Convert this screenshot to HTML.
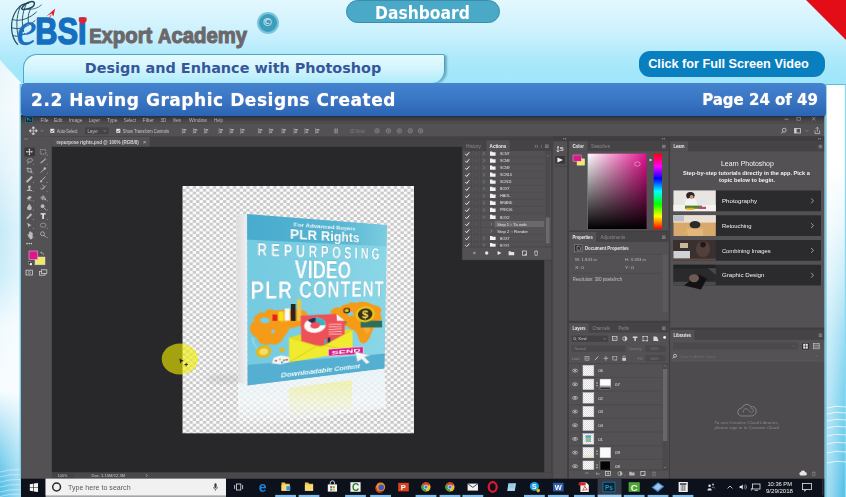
<!DOCTYPE html>
<html lang="en">
<head>
<meta charset="utf-8">
<title>2.2 Having Graphic Designs Created</title>
<style>
html,body{margin:0;padding:0;}
body{width:846px;height:497px;overflow:hidden;position:relative;background:#fff;font-family:"DejaVu Sans","Liberation Sans",sans-serif;}
.abs{position:absolute;}
#stage{position:absolute;left:0;top:0;width:846px;height:497px;overflow:hidden;background:#fff;}
#hdr{left:0;top:0;width:846px;height:84px;border-bottom:1px solid #63bcd3;background:linear-gradient(#e3f8fe 0,#d5f4fe 20px,#c4effd 40px,#b0eafb 55px,#a4e7fa 70px,#9fe6fa 84px);}
#lstrip{left:0;top:60px;width:21px;height:437px;clip-path:polygon(0 0,21px 23px,21px 100%,0 100%);background:linear-gradient(to right,rgba(255,255,255,0) 0,rgba(255,255,255,.4) 85%,rgba(255,255,255,.4) 100%),linear-gradient(#eaf6fb 0,#eff9fd 50px,#e0f3fb 110px,#c6eaf8 170px,#cbedf9 215px,#f0fafe 265px,#f7fcff 330px,#93d8f1 385px,#55bfe7 425px,#55bfe7 437px);}
#rstrip{left:825px;top:85px;width:21px;height:412px;background:linear-gradient(to right,rgba(255,255,255,.5) 0,rgba(255,255,255,.42) 30%,rgba(255,255,255,0) 100%),linear-gradient(#ffffff 0,#ffffff 80px,#e8f7fc 140px,#c6ebf8 195px,#9cdcf3 250px,#78d0ee 310px,#5fc6ea 375px,#4cbbe5 412px);}
#tab{left:23px;top:53.6px;width:420px;height:28.6px;border:1px solid #4fa9c4;border-right:1.6px solid #4a9db8;border-bottom:none;border-radius:14px 2px 13px 0;background:linear-gradient(#e6faff 0,#d2f4fd 50%,#aeecfb 100%);box-shadow:2px 1px 2px rgba(60,120,150,.5);}
#tabtxt{left:23px;top:54px;width:420px;height:28px;line-height:29px;text-align:center;font-weight:bold;font-size:14.4px;color:#35579a;letter-spacing:0px;}
#bar{left:21px;top:83px;width:805px;height:32.8px;border-radius:5px 5px 4px 4px;background:linear-gradient(#4583cf 0,#3a78c6 45%,#2b64b3 100%);box-shadow:0 1px 1px rgba(20,50,100,.6);}
#title{left:31px;top:84px;height:32px;line-height:33px;color:#fff;font-weight:bold;font-size:17px;letter-spacing:.55px;text-shadow:0 0 1px rgba(255,220,220,.8);white-space:nowrap;}
#pageno{right:28px;top:84px;height:32px;line-height:33px;color:#fff;font-weight:bold;font-size:15px;white-space:nowrap;text-shadow:0 0 1px rgba(255,220,220,.8);}
#dash{left:346px;top:0px;width:152px;height:20.8px;border:1px solid #3b8caa;border-radius:12px;background:#4aa9c6;color:#fff;font-weight:bold;font-size:17.2px;line-height:25.5px;text-align:center;}
#dash span{display:inline-block;transform:scaleX(.905);transform-origin:50% 50%;margin-left:-2px;}
#copy{left:256.5px;top:12px;width:18px;height:18px;border:2px solid #7cc4da;border-radius:50%;background:#3d9dbd;color:#e8f8ff;font-size:11px;line-height:18px;text-align:center;}
#full{left:639px;top:51px;width:186px;height:26px;border-radius:11px;background:#0a7fc0;color:#fff;font-family:"Liberation Sans",sans-serif;font-weight:bold;font-size:12.7px;line-height:26px;text-align:left;padding-left:9.2px;box-sizing:border-box;white-space:nowrap;}
#vid{left:0;top:0;width:846px;height:497px;clip-path:inset(115px 21.5px 0 21px);font-family:"Liberation Sans",sans-serif;}
#ps{filter:blur(.55px);}
#cover{filter:blur(.4px);}

#cover{position:absolute;left:0;top:0;width:140px;height:171px;transform-origin:0 0;transform:matrix3d(1.54772792,0.39701789,0.00000000,0.00141532,0.03985153,1.06044144,0.00000000,0.00014920,0.00000000,0.00000000,1.00000000,0.00000000,247.00000000,214.00000000,0.00000000,1.00000000);}
</style>
</head>
<body>
<div id="stage">
  <div id="hdr" class="abs"></div>
  <div id="lstrip" class="abs"></div>
  <div id="rstrip" class="abs"></div>
  <svg class="abs" style="left:0;top:0" width="846" height="497" viewBox="0 0 846 497">
    <polygon points="806,0 846,0 846,40" fill="#e30d18"/>
    <rect x="19.6" y="84" width="1.6" height="395" fill="#7ccdea"/>
    <rect x="824.6" y="85" width="2" height="412" fill="#6cc8e8"/>
    <rect x="844.8" y="85" width="1.2" height="412" fill="#86dbf2"/>
    <g fill="none" stroke="#ffffff" stroke-opacity=".8" stroke-width=".9">
      <path d="M827 408q9 -3 19 -1M827 414q9 -3 19 -1M827 421q9 -3 19 -1M827 428q9 -3 19 -1M827 436q9 -3 19 -1M827 444q9 -3 19 -1M827 453q9 -3 19 -1M827 463q9 -3 19 -1"/>
      <path d="M0 472q10 -3 20 -2.4M0 477q10 -3 20 -2.4M0 482q10 -3 20 -2.4M0 487q10 -3 20 -2.4M0 492q10 -3 20 -2.4M0 496.5q10 -3 20 -2.4" stroke-opacity=".6" stroke-width=".7"/>
    </g>
  </svg>
  <svg class="abs" style="left:0;top:0" width="300" height="52" viewBox="0 0 300 52">
    <g fill="none" stroke="#1f4a5c" stroke-width="1.15" stroke-linecap="round">
      <path d="M17.6 44.4C10.4 36.5 9 21 16.6 10C19.8 5.6 24 3.2 28.6 3.2"/>
      <path d="M21.6 8.6C25.6 1.4 35 -.4 34.4 3.8C33.8 7.8 26.6 10 22 9.2" stroke-width="1.5"/>
      <path d="M28 9.4C33 9.6 38 8.2 41.4 5" stroke-width=".7"/>
      <path d="M12.6 19.6C20 22 30 18.4 36.4 12" stroke-width=".9"/>
      <path d="M11.4 27.6C19 30.6 28 26.8 35 20.6" stroke-width=".9"/>
      <path d="M13.2 35.6C17.4 37 21.4 36 24.6 33.6" stroke-width=".9"/>
      <path d="M20.4 6.6C15.8 16 15.8 30 19.4 40" stroke-width=".9"/>
      <path d="M26 5C21.8 13 21.6 23 23.6 31.6" stroke-width=".9"/>
      <path d="M31.4 7.4C28.2 12.4 27.6 18 28.6 23.6" stroke-width=".9"/>
    </g>
    <text x="16.6" y="44.8" font-family="Liberation Serif, serif" font-style="italic" font-size="49" fill="#1a6fbf" stroke="#1a6fbf" stroke-width=".35" textLength="20" lengthAdjust="spacingAndGlyphs">e</text>
    <text x="35.2" y="44.4" font-family="Liberation Sans, sans-serif" font-weight="bold" font-size="37.4" fill="#166fbe" stroke="#166fbe" stroke-width="1.5" stroke-linejoin="round" textLength="51.4" lengthAdjust="spacingAndGlyphs">BSI</text>
    <path d="M78.8 17.4h7.8v3.6l-3.9 3.8l-3.9 -3.8z" fill="#e3202e"/>
    <path d="M46.4 16.2L55.2 8.6L53.4 16.6L51.6 13.4z" fill="#e3202e"/>
    <path d="M48.6 19.4l2.6 -4.6" stroke="#e3202e" stroke-width=".8" fill="none"/>
    <text x="89.2" y="42.6" font-family="Liberation Sans, sans-serif" font-weight="bold" font-size="22.6" fill="#6b686b" stroke="#6b686b" stroke-width="1.15" stroke-linejoin="round" textLength="158" lengthAdjust="spacingAndGlyphs"><tspan font-size="20.5">E</tspan>xport <tspan font-size="20.5">A</tspan>cademy</text>
  </svg>

  <div id="tab" class="abs"></div>
  <div id="tabtxt" class="abs">Design and Enhance with Photoshop</div>
  <div id="dash" class="abs"><span>Dashboard</span></div>
  <div id="copy" class="abs">©</div>
  <div id="full" class="abs">Click for Full Screen Video</div>
  <div id="vid" class="abs">
<svg id="ps" class="abs" style="left:0;top:0" width="846" height="497" viewBox="0 0 846 497" font-family="Liberation Sans, sans-serif">
<defs>
<pattern id="chk" x="182.75" y="186" width="6.7" height="5.66" patternUnits="userSpaceOnUse"><rect width="6.7" height="5.66" fill="#fcfcfc"/><rect x="3.35" width="3.35" height="2.83" fill="#c9c9c9"/><rect y="2.83" width="3.35" height="2.83" fill="#c9c9c9"/></pattern>
<pattern id="chk2" width="2" height="2" patternUnits="userSpaceOnUse"><rect width="2" height="2" fill="#fbfbfb"/><rect width="1" height="1" fill="#dcdcdc"/><rect x="1" y="1" width="1" height="1" fill="#dcdcdc"/></pattern>
<linearGradient id="gW" x1="0" y1="0" x2="1" y2="0"><stop offset="0" stop-color="#fff"/><stop offset="1" stop-color="#fff" stop-opacity="0"/></linearGradient>
<linearGradient id="gK" x1="0" y1="0" x2="0" y2="1"><stop offset="0" stop-color="#000" stop-opacity="0"/><stop offset="1" stop-color="#000"/></linearGradient>
<linearGradient id="gH" x1="0" y1="0" x2="0" y2="1"><stop offset="0" stop-color="#ff0000"/><stop offset=".17" stop-color="#ff00ff"/><stop offset=".33" stop-color="#0000ff"/><stop offset=".5" stop-color="#00ffff"/><stop offset=".67" stop-color="#00ff00"/><stop offset=".83" stop-color="#ffff00"/><stop offset="1" stop-color="#ff0000"/></linearGradient>
<linearGradient id="gSh" gradientUnits="userSpaceOnUse" x1="0" y1="115" x2="0" y2="122"><stop offset="0" stop-color="#2a292d"/><stop offset=".3" stop-color="#38363a"/><stop offset="1" stop-color="#4d4b4e"/></linearGradient>
<linearGradient id="gMask" x1="0" y1="0" x2="0" y2="1"><stop offset="0" stop-color="#fff"/><stop offset=".55" stop-color="#fff"/><stop offset=".95" stop-color="#111"/></linearGradient>
</defs>
<rect x="12.0" y="108.0" width="824.0" height="398.0" fill="#535154"/>
<rect x="12.0" y="108.0" width="824.0" height="16.0" fill="#4d4b4e"/>
<rect x="12.0" y="108.0" width="824.0" height="14.0" fill="url(#gSh)"/>
<rect x="25.4" y="117.0" width="7.0" height="5.3" fill="#0b2a3c" stroke="#2a8db0" stroke-width="0.5"/>
<text x="26.8" y="121.0" font-size="3.6" fill="#2fa0cc" textLength="4.4" lengthAdjust="spacingAndGlyphs" font-weight="bold">Ps</text>
<text x="40.5" y="121.6" font-size="5.1" fill="#b9b9b9" textLength="8.0" lengthAdjust="spacingAndGlyphs">File</text>
<text x="54.0" y="121.6" font-size="5.1" fill="#b9b9b9" textLength="8.5" lengthAdjust="spacingAndGlyphs">Edit</text>
<text x="69.0" y="121.6" font-size="5.1" fill="#b9b9b9" textLength="13.5" lengthAdjust="spacingAndGlyphs">Image</text>
<text x="88.7" y="121.6" font-size="5.1" fill="#b9b9b9" textLength="11.3" lengthAdjust="spacingAndGlyphs">Layer</text>
<text x="107.0" y="121.6" font-size="5.1" fill="#b9b9b9" textLength="10.5" lengthAdjust="spacingAndGlyphs">Type</text>
<text x="123.7" y="121.6" font-size="5.1" fill="#b9b9b9" textLength="12.3" lengthAdjust="spacingAndGlyphs">Select</text>
<text x="142.6" y="121.6" font-size="5.1" fill="#b9b9b9" textLength="11.4" lengthAdjust="spacingAndGlyphs">Filter</text>
<text x="160.5" y="121.6" font-size="5.1" fill="#b9b9b9" textLength="5.5" lengthAdjust="spacingAndGlyphs">3D</text>
<text x="172.8" y="121.6" font-size="5.1" fill="#b9b9b9" textLength="8.2" lengthAdjust="spacingAndGlyphs">View</text>
<text x="189.0" y="121.6" font-size="5.1" fill="#b9b9b9" textLength="18.0" lengthAdjust="spacingAndGlyphs">Window</text>
<text x="214.0" y="121.6" font-size="5.1" fill="#b9b9b9" textLength="9.0" lengthAdjust="spacingAndGlyphs">Help</text>
<path d="M784.5 119.2H788.5" fill="none" stroke="#9c9c9c" stroke-width="0.70"/>
<rect x="797.0" y="117.2" width="3.6" height="3.0" fill="none" stroke="#9c9c9c" stroke-width="0.6"/>
<path d="M812 117l3.6 3.4M815.6 117l-3.6 3.4" fill="none" stroke="#9c9c9c" stroke-width="0.70"/>
<rect x="12.0" y="124.0" width="824.0" height="12.4" fill="#535154"/>
<path d="M33.3 127.2v7.2M29.7 130.8h7.2M33.3 126.6l-1.4 1.6h2.8zM33.3 135l-1.4-1.6h2.8zM29.1 130.8l1.6-1.4v2.8zM37.5 130.8l-1.6-1.4v2.8z" fill="#d0d0d0" stroke="#d0d0d0" stroke-width="0.70"/>
<path d="M40.8 130.2l1.2 1.3 1.2-1.3" fill="none" stroke="#a8a8a8" stroke-width="0.60"/>
<rect x="50.3" y="128.8" width="4.0" height="4.0" fill="#e8e8e8"/>
<path d="M51 130.8l1 1.1 1.7-2" fill="none" stroke="#333" stroke-width="0.60"/>
<text x="57.0" y="132.5" font-size="4.8" fill="#c6c6c6" textLength="21.3" lengthAdjust="spacingAndGlyphs">Auto-Select:</text>
<rect x="85.0" y="127.3" width="23.6" height="7.0" fill="#454346"/>
<text x="87.5" y="132.5" font-size="4.6" fill="#bdbdbd" textLength="10.5" lengthAdjust="spacingAndGlyphs">Layer</text>
<path d="M103.6 130.2l1.2 1.3 1.2-1.3" fill="none" stroke="#a8a8a8" stroke-width="0.60"/>
<rect x="116.3" y="128.8" width="4.0" height="4.0" fill="#e8e8e8"/>
<path d="M117 130.8l1 1.1 1.7-2" fill="none" stroke="#333" stroke-width="0.60"/>
<text x="122.8" y="132.5" font-size="4.8" fill="#c6c6c6" textLength="46.2" lengthAdjust="spacingAndGlyphs">Show Transform Controls</text>
<path d="M182.4 128.2v5.4" fill="none" stroke="#a6a6a6" stroke-width="0.70"/>
<rect x="183.2" y="129.0" width="3.0" height="1.6" fill="#a6a6a6"/>
<rect x="183.2" y="131.4" width="2.0" height="1.6" fill="#a6a6a6"/>
<path d="M193.4 128.2v5.4" fill="none" stroke="#a6a6a6" stroke-width="0.70"/>
<rect x="194.2" y="129.0" width="3.0" height="1.6" fill="#a6a6a6"/>
<rect x="194.2" y="131.4" width="2.0" height="1.6" fill="#a6a6a6"/>
<path d="M204.4 128.2v5.4" fill="none" stroke="#a6a6a6" stroke-width="0.70"/>
<rect x="205.2" y="129.0" width="3.0" height="1.6" fill="#a6a6a6"/>
<rect x="205.2" y="131.4" width="2.0" height="1.6" fill="#a6a6a6"/>
<path d="M219.1 128.2v5.4" fill="none" stroke="#a6a6a6" stroke-width="0.70"/>
<rect x="219.9" y="129.0" width="3.0" height="1.6" fill="#a6a6a6"/>
<rect x="219.9" y="131.4" width="2.0" height="1.6" fill="#a6a6a6"/>
<path d="M230.1 128.2v5.4" fill="none" stroke="#a6a6a6" stroke-width="0.70"/>
<rect x="230.9" y="129.0" width="3.0" height="1.6" fill="#a6a6a6"/>
<rect x="230.9" y="131.4" width="2.0" height="1.6" fill="#a6a6a6"/>
<path d="M240.7 128.2v5.4" fill="none" stroke="#a6a6a6" stroke-width="0.70"/>
<rect x="241.5" y="129.0" width="3.0" height="1.6" fill="#a6a6a6"/>
<rect x="241.5" y="131.4" width="2.0" height="1.6" fill="#a6a6a6"/>
<path d="M258.4 128.2v5.4" fill="none" stroke="#a6a6a6" stroke-width="0.70"/>
<rect x="259.2" y="129.0" width="3.0" height="1.6" fill="#a6a6a6"/>
<rect x="259.2" y="131.4" width="2.0" height="1.6" fill="#a6a6a6"/>
<path d="M269.4 128.2v5.4" fill="none" stroke="#a6a6a6" stroke-width="0.70"/>
<rect x="270.2" y="129.0" width="3.0" height="1.6" fill="#a6a6a6"/>
<rect x="270.2" y="131.4" width="2.0" height="1.6" fill="#a6a6a6"/>
<path d="M282.1 128.2v5.4" fill="none" stroke="#a6a6a6" stroke-width="0.70"/>
<rect x="282.9" y="129.0" width="3.0" height="1.6" fill="#a6a6a6"/>
<rect x="282.9" y="131.4" width="2.0" height="1.6" fill="#a6a6a6"/>
<path d="M294.1 128.2v5.4" fill="none" stroke="#a6a6a6" stroke-width="0.70"/>
<rect x="294.9" y="129.0" width="3.0" height="1.6" fill="#a6a6a6"/>
<rect x="294.9" y="131.4" width="2.0" height="1.6" fill="#a6a6a6"/>
<path d="M305.0 128.2v5.4" fill="none" stroke="#a6a6a6" stroke-width="0.70"/>
<rect x="305.8" y="129.0" width="3.0" height="1.6" fill="#a6a6a6"/>
<rect x="305.8" y="131.4" width="2.0" height="1.6" fill="#a6a6a6"/>
<path d="M315.6 128.2v5.4" fill="none" stroke="#a6a6a6" stroke-width="0.70"/>
<rect x="316.4" y="129.0" width="3.0" height="1.6" fill="#a6a6a6"/>
<rect x="316.4" y="131.4" width="2.0" height="1.6" fill="#a6a6a6"/>
<rect x="334.6" y="128.4" width="1.0" height="5.0" fill="#a6a6a6"/>
<rect x="336.6" y="128.4" width="1.0" height="5.0" fill="#a6a6a6"/>
<text x="349.8" y="132.5" font-size="4.6" fill="#807e81" textLength="16.0" lengthAdjust="spacingAndGlyphs">3D Mode:</text>
<circle cx="377.0" cy="130.8" r="2.2" fill="none" stroke="#8b898c" stroke-width="0.80"/>
<path d="M377.0 129.4v2.8M375.6 130.8h2.8" fill="none" stroke="#8b898c" stroke-width="0.60"/>
<circle cx="388.4" cy="130.8" r="2.2" fill="none" stroke="#8b898c" stroke-width="0.80"/>
<path d="M388.4 129.4v2.8M387.0 130.8h2.8" fill="none" stroke="#8b898c" stroke-width="0.60"/>
<circle cx="399.4" cy="130.8" r="2.2" fill="none" stroke="#8b898c" stroke-width="0.80"/>
<path d="M399.4 129.4v2.8M398.0 130.8h2.8" fill="none" stroke="#8b898c" stroke-width="0.60"/>
<circle cx="410.3" cy="130.8" r="2.2" fill="none" stroke="#8b898c" stroke-width="0.80"/>
<path d="M410.3 129.4v2.8M408.9 130.8h2.8" fill="none" stroke="#8b898c" stroke-width="0.60"/>
<circle cx="420.6" cy="130.8" r="2.2" fill="none" stroke="#8b898c" stroke-width="0.80"/>
<path d="M420.6 129.4v2.8M419.2 130.8h2.8" fill="none" stroke="#8b898c" stroke-width="0.60"/>
<circle cx="784.2" cy="130.2" r="1.9" fill="none" stroke="#d0d0d0" stroke-width="0.80"/>
<path d="M782.8 131.8l-1.5 1.7" fill="none" stroke="#d0d0d0" stroke-width="0.80"/>
<rect x="794.6" y="128.6" width="5.8" height="4.4" fill="none" stroke="#d0d0d0" stroke-width="0.8"/>
<rect x="794.6" y="128.6" width="2.0" height="4.4" fill="#d0d0d0"/>
<path d="M805.6 130.2l1.3 1.3 1.3-1.3" fill="none" stroke="#9a9a9a" stroke-width="0.60"/>
<path d="M815 130.4v3.2h4.6v-3.2M817.3 131.6v-4.2M815.9 128.6l1.4-1.4 1.4 1.4" fill="none" stroke="#d0d0d0" stroke-width="0.70"/>
<rect x="12.0" y="136.4" width="824.0" height="10.4" fill="#434144"/>
<rect x="12.0" y="136.4" width="39.8" height="341.8" fill="#535154"/>
<path d="M24.4 139h1.2M26.4 139h1.2" fill="none" stroke="#bdbdbd" stroke-width="0.70"/>
<rect x="52.0" y="137.0" width="97.8" height="9.8" fill="#535154"/>
<text x="56.6" y="144.1" font-size="5.0" fill="#d6d6d6" textLength="82.2" lengthAdjust="spacingAndGlyphs" font-weight="bold">repurpose rights.psd @ 100% (RGB/8)</text>
<text x="144.6" y="144.2" font-size="5.5" fill="#c8c8c8" text-anchor="middle">×</text>
<rect x="51.8" y="146.8" width="501.2" height="325.8" fill="#28282a"/>
<rect x="51.8" y="472.6" width="501.2" height="5.8" fill="#4a484b"/>
<rect x="51.8" y="472.6" width="22.2" height="5.8" fill="#454346"/>
<text x="57.8" y="477.0" font-size="4.2" fill="#c9c9c9" textLength="9.5" lengthAdjust="spacingAndGlyphs">100%</text>
<text x="91.4" y="477.0" font-size="4.2" fill="#c9c9c9" textLength="33.8" lengthAdjust="spacingAndGlyphs">Doc: 1.15M/12.3M</text>
<path d="M146 474.2l1.3 1.4-1.3 1.4" fill="none" stroke="#bdbdbd" stroke-width="0.60"/>
<rect x="544.2" y="146.8" width="7.4" height="325.8" fill="#4a484b"/>
<rect x="551.4" y="136.4" width="1.8" height="342.0" fill="#454346"/>
<rect x="24.4" y="147.6" width="10.6" height="8.8" fill="#3a383b"/>
<g transform="translate(29.40 151.80) scale(.86) translate(-29.40 -151.80)" opacity=".92">
<path d="M29.4 148.6v6.4M26.2 151.8h6.4" fill="none" stroke="#fff" stroke-width="0.90"/>
<path d="M29.4 147.9l-1.2 1.4h2.4zM29.4 155.7l-1.2 -1.4h2.4zM25.5 151.8l1.4 -1.2v2.4zM33.3 151.8l-1.4 -1.2v2.4z" fill="#fff"/>
</g>
<g transform="translate(43.10 151.80) scale(.86) translate(-43.10 -151.80)" opacity=".92">
<rect x="39.9" y="149.2" width="6.4" height="5.2" fill="none" stroke="#c4c4c4" stroke-width="0.8" stroke-dasharray="1.4 0.9"/>
</g>
<path d="M46.4 155.4h1.2v-1.2z" fill="#a8a8a8"/>
<g transform="translate(29.40 160.98) scale(.86) translate(-29.40 -160.98)" opacity=".92">
<path d="M29.4 158.6c-3 0 -3.6 3 -1 3.6c3 .6 5 -1 4.4 -2.8c-.5 -1.4 -2 -1.6 -3.4 -.8M28.4 162.2l-1.2 2.4" fill="none" stroke="#c4c4c4" stroke-width="0.80"/>
</g>
<g transform="translate(43.10 160.98) scale(.86) translate(-43.10 -160.98)" opacity=".92">
<path d="M40.3 163.6l5 -4.6" fill="none" stroke="#c4c4c4" stroke-width="1.20"/>
<path d="M44.7 157.8l1.6 .2M46.3 160.0l.2 -1.4" fill="none" stroke="#c4c4c4" stroke-width="0.60"/>
</g>
<path d="M32.6 164.6h1.2v-1.2z" fill="#a8a8a8"/>
<path d="M46.4 164.6h1.2v-1.2z" fill="#a8a8a8"/>
<g transform="translate(29.40 170.16) scale(.86) translate(-29.40 -170.16)" opacity=".92">
<path d="M27.6 166.8v5.4h5.4M26.0 168.4h5.4v5.4" fill="none" stroke="#c4c4c4" stroke-width="0.90"/>
</g>
<g transform="translate(43.10 170.16) scale(.86) translate(-43.10 -170.16)" opacity=".92">
<path d="M40.3 173.0l4.2 -4.2" fill="none" stroke="#c4c4c4" stroke-width="1.10"/>
<circle cx="45.1" cy="168.2" r="1.4" fill="#c4c4c4"/>
</g>
<path d="M32.6 173.8h1.2v-1.2z" fill="#a8a8a8"/>
<path d="M46.4 173.8h1.2v-1.2z" fill="#a8a8a8"/>
<g transform="translate(29.40 179.34) scale(.86) translate(-29.40 -179.34)" opacity=".92">
<path d="M26.9 181.8l5 -5" fill="none" stroke="#c4c4c4" stroke-width="2.40" stroke-linecap="round"/>
</g>
<g transform="translate(43.10 179.34) scale(.86) translate(-43.10 -179.34)" opacity=".92">
<path d="M41.5 180.7l4.4 -4.6" fill="none" stroke="#c4c4c4" stroke-width="1.10"/>
<circle cx="40.8" cy="181.6" r="1.3" fill="#c4c4c4"/>
</g>
<path d="M32.6 182.9h1.2v-1.2z" fill="#a8a8a8"/>
<path d="M46.4 182.9h1.2v-1.2z" fill="#a8a8a8"/>
<g transform="translate(29.40 188.52) scale(.86) translate(-29.40 -188.52)" opacity=".92">
<path d="M26.4 190.1h6v1.4h-6zM28.4 187.5h2v2.6h-2z" fill="#c4c4c4"/>
<circle cx="29.4" cy="186.5" r="1.6" fill="#c4c4c4"/>
</g>
<g transform="translate(43.10 188.52) scale(.86) translate(-43.10 -188.52)" opacity=".92">
<path d="M42.1 189.7l4 -4.4" fill="none" stroke="#c4c4c4" stroke-width="1.10"/>
<path d="M39.7 187.9a2.4 2.4 0 1 0 2 -3.6" fill="none" stroke="#c4c4c4" stroke-width="0.70"/>
</g>
<path d="M32.6 192.1h1.2v-1.2z" fill="#a8a8a8"/>
<path d="M46.4 192.1h1.2v-1.2z" fill="#a8a8a8"/>
<g transform="translate(29.40 197.70) scale(.86) translate(-29.40 -197.70)" opacity=".92">
<path d="M26.2 198.7l3 -3.4l3 1.6l-3 3.4z" fill="#c4c4c4"/>
<path d="M27.4 200.7h5" fill="none" stroke="#999" stroke-width="0.60"/>
</g>
<g transform="translate(43.10 197.70) scale(.86) translate(-43.10 -197.70)" opacity=".92">
<path d="M39.7 197.7l3.4 -3l3 3.2l-3.4 3z" fill="#9d9d9d"/>
<circle cx="45.7" cy="199.7" r="1.0" fill="#c8c8c8"/>
</g>
<path d="M32.6 201.3h1.2v-1.2z" fill="#a8a8a8"/>
<path d="M46.4 201.3h1.2v-1.2z" fill="#a8a8a8"/>
<g transform="translate(29.40 206.88) scale(.86) translate(-29.40 -206.88)" opacity=".92">
<path d="M29.4 203.1c-2 2.8 -2.8 3.8 -2.8 5a2.8 2.8 0 0 0 5.6 0c0 -1.2 -.8 -2.2 -2.8 -5z" fill="#c4c4c4"/>
</g>
<g transform="translate(43.10 206.88) scale(.86) translate(-43.10 -206.88)" opacity=".92">
<circle cx="42.5" cy="206.1" r="2.2" fill="#c4c4c4"/>
<path d="M43.9 207.7l2.6 2.8" fill="none" stroke="#c4c4c4" stroke-width="1.10"/>
</g>
<path d="M32.6 210.5h1.2v-1.2z" fill="#a8a8a8"/>
<path d="M46.4 210.5h1.2v-1.2z" fill="#a8a8a8"/>
<g transform="translate(29.40 216.06) scale(.86) translate(-29.40 -216.06)" opacity=".92">
<path d="M26.4 217.7l4.6 -4.8l1.6 1.6l-4.8 4.6l-2 .6z" fill="#c4c4c4"/>
</g>
<g transform="translate(43.10 216.06) scale(.86) translate(-43.10 -216.06)" opacity=".92">
<path d="M40.1 212.7h6v1.6h-2.1v5.2h-1.8v-5.2h-2.1z" fill="#fff"/>
</g>
<path d="M32.6 219.7h1.2v-1.2z" fill="#a8a8a8"/>
<path d="M46.4 219.7h1.2v-1.2z" fill="#a8a8a8"/>
<g transform="translate(29.40 225.24) scale(.86) translate(-29.40 -225.24)" opacity=".92">
<path d="M26.6 222.2l5.4 3l-2.4 .5l-1 2.4z" fill="#c4c4c4"/>
</g>
<g transform="translate(43.10 225.24) scale(.86) translate(-43.10 -225.24)" opacity=".92">
<ellipse cx="43.1" cy="225.2" rx="3.4" ry="2.4" fill="none" stroke="#aaa" stroke-width="0.8"/>
</g>
<path d="M32.6 228.8h1.2v-1.2z" fill="#a8a8a8"/>
<path d="M46.4 228.8h1.2v-1.2z" fill="#a8a8a8"/>
<g transform="translate(29.40 234.42) scale(.86) translate(-29.40 -234.42)" opacity=".92">
<path d="M28.6 237.8c-1.2 -2 -2 -3.6 -.8 -3.8l1 1.2v-3.4h1v-1h1.2v1h1.2v.8h1v4.6c0 2 -1 3 -2.4 3z" fill="#c4c4c4"/>
</g>
<g transform="translate(43.10 234.42) scale(.86) translate(-43.10 -234.42)" opacity=".92">
<circle cx="42.4" cy="233.7" r="2.3" fill="none" stroke="#c4c4c4" stroke-width="0.90"/>
<path d="M44.1 235.4l2.4 2.4" fill="none" stroke="#c4c4c4" stroke-width="1.10"/>
</g>
<path d="M32.6 238.0h1.2v-1.2z" fill="#a8a8a8"/>
<path d="M46.4 238.0h1.2v-1.2z" fill="#a8a8a8"/>
<circle cx="27.0" cy="243.6" r="0.8" fill="#cfcfcf"/>
<circle cx="29.2" cy="243.6" r="0.8" fill="#cfcfcf"/>
<circle cx="31.4" cy="243.6" r="0.8" fill="#cfcfcf"/>
<rect x="35.0" y="257.0" width="10.0" height="7.8" fill="#f3e86a" stroke="#d8d8d8" stroke-width="0.5"/>
<rect x="29.0" y="251.0" width="8.8" height="8.6" fill="#e0148c" stroke="#d8d8d8" stroke-width="0.5"/>
<path d="M41 252.6a2.4 2.4 0 0 1 2.6 2.6" fill="none" stroke="#bdbdbd" stroke-width="0.60"/>
<path d="M40.2 252.6l1.4 -1v2z" fill="#bdbdbd"/>
<rect x="28.4" y="261.8" width="2.2" height="2.2" fill="#111" stroke="#bbb" stroke-width="0.4"/>
<rect x="29.8" y="263.0" width="2.2" height="2.2" fill="#fff" stroke="#555" stroke-width="0.3"/>
<rect x="26.0" y="270.2" width="6.6" height="4.8" fill="none" stroke="#cfcfcf" stroke-width="0.8"/>
<circle cx="29.3" cy="272.6" r="1.1" fill="none" stroke="#cfcfcf" stroke-width="0.60"/>
<rect x="39.6" y="271.4" width="5.4" height="3.8" fill="none" stroke="#cfcfcf" stroke-width="0.8"/>
<rect x="41.4" y="269.8" width="5.4" height="3.8" fill="#535154" stroke="#cfcfcf" stroke-width="0.8"/>
<rect x="553.4" y="136.4" width="282.6" height="4.8" fill="#3f3d40"/>
<path d="M563.2 138.8h1.2M565 138.8h1.2M662 138.8h1.2M663.8 138.8h1.2M818 138.8h1.2M819.8 138.8h1.2" fill="none" stroke="#c4c4c4" stroke-width="0.70"/>
<rect x="553.4" y="141.2" width="13.8" height="337.2" fill="#535154"/>
<rect x="567.2" y="141.2" width="1.8" height="337.2" fill="#403e41"/>
<path d="M558 146.6v5.2M556.6 150.4l1.4 1.6 1.4 -1.6" fill="none" stroke="#e4e4e4" stroke-width="0.80"/>
<rect x="557.2" y="146.4" width="1.6" height="1.2" fill="#e4e4e4"/>
<text x="560.0" y="151.4" font-size="5.4" fill="#e4e4e4" textLength="3.6" lengthAdjust="spacingAndGlyphs" font-weight="bold">5</text>
<rect x="555.2" y="156.0" width="9.8" height="7.8" fill="#39373a"/>
<path d="M557.4 157.6l5.6 2.4l-5.6 2.4z" fill="#f2f2f2"/>
<path d="M554 166.4h12.6" fill="none" stroke="#444245" stroke-width="0.60"/>
<rect x="569.0" y="141.2" width="99.6" height="90.4" fill="#535154"/>
<rect x="569.0" y="141.2" width="99.6" height="10.0" fill="#454346"/>
<rect x="569.0" y="141.2" width="18.4" height="10.2" fill="#535154"/>
<text x="572.4" y="148.1" font-size="5.0" fill="#f0f0f0" textLength="11.6" lengthAdjust="spacingAndGlyphs" font-weight="bold">Color</text>
<text x="591.0" y="148.0" font-size="4.8" fill="#8d8b8e" textLength="19.0" lengthAdjust="spacingAndGlyphs">Swatches</text>
<path d="M662 145.4h3.6M662 146.6h3.6M662 147.8h3.6" fill="none" stroke="#bdbdbd" stroke-width="0.50"/>
<rect x="577.0" y="158.8" width="7.8" height="6.4" fill="#f3e86a" stroke="#d6d6d6" stroke-width="0.4"/>
<rect x="573.0" y="155.0" width="8.2" height="6.2" fill="#e0148c" stroke="#d6d6d6" stroke-width="0.4"/>
<rect x="588.6" y="153.7" width="58" height="75.3" fill="#e6108e"/>
<rect x="587.7" y="153.7" width="58.9" height="75.3" fill="url(#gW)"/>
<rect x="587.7" y="153.7" width="58.9" height="75.3" fill="url(#gK)"/>
<ellipse cx="637.4" cy="164" rx="2.8" ry="2.2" fill="none" stroke="#f0d0e6" stroke-width="0.5"/>
<rect x="653.7" y="153.7" width="8.3" height="75.3" fill="url(#gH)"/>
<path d="M649.6 158.4l2.6 1.5l-2.6 1.5z" fill="#f4f4f4"/>
<rect x="668.6" y="141.2" width="1.8" height="337.2" fill="#403e41"/>
<rect x="569.0" y="231.6" width="99.6" height="91.0" fill="#535154"/>
<rect x="569.0" y="231.6" width="99.6" height="10.4" fill="#454346"/>
<rect x="569.0" y="231.6" width="27.2" height="10.6" fill="#535154"/>
<rect x="569.0" y="230.6" width="99.6" height="1.2" fill="#403e41"/>
<text x="572.4" y="238.6" font-size="4.8" fill="#f0f0f0" textLength="20.3" lengthAdjust="spacingAndGlyphs" font-weight="bold">Properties</text>
<text x="600.5" y="238.6" font-size="4.6" fill="#8d8b8e" textLength="24.8" lengthAdjust="spacingAndGlyphs">Adjustments</text>
<path d="M662 236h3.6M662 237.2h3.6M662 238.4h3.6" fill="none" stroke="#bdbdbd" stroke-width="0.50"/>
<rect x="574.6" y="244.8" width="7.4" height="7.0" fill="#2f2e30" stroke="#9a9a9a" stroke-width="0.5"/>
<path d="M577 246.2h2.4l1.2 1.2v2.8h-3.6z" fill="none" stroke="#cfcfcf" stroke-width="0.50"/>
<text x="585.0" y="249.9" font-size="4.8" fill="#e8e8e8" textLength="43.7" lengthAdjust="spacingAndGlyphs" font-weight="bold">Document Properties</text>
<path d="M572 254.4h90" fill="none" stroke="#48464a" stroke-width="0.60"/>
<text x="575.0" y="261.1" font-size="4.4" fill="#bcbcbc" textLength="22.0" lengthAdjust="spacingAndGlyphs">W:  1.833 in</text>
<text x="625.0" y="261.1" font-size="4.4" fill="#bcbcbc" textLength="21.0" lengthAdjust="spacingAndGlyphs">H:  3.333 in</text>
<text x="575.0" y="268.9" font-size="4.4" fill="#bcbcbc" textLength="9.0" lengthAdjust="spacingAndGlyphs">X:  0</text>
<text x="625.0" y="268.9" font-size="4.4" fill="#bcbcbc" textLength="9.0" lengthAdjust="spacingAndGlyphs">Y:  0</text>
<path d="M572 273.4h90" fill="none" stroke="#48464a" stroke-width="0.60"/>
<text x="572.8" y="281.3" font-size="4.5" fill="#c4c4c4" textLength="49.2" lengthAdjust="spacingAndGlyphs">Resolution: 300 pixels/inch</text>
<rect x="662.6" y="254.4" width="5.2" height="57.4" fill="#5b595c"/>
<rect x="569.0" y="320.8" width="99.6" height="2.4" fill="#403e41"/>
<rect x="569.0" y="323.2" width="99.6" height="155.2" fill="#535154"/>
<rect x="569.0" y="323.2" width="99.6" height="9.4" fill="#454346"/>
<rect x="569.0" y="323.2" width="19.6" height="9.6" fill="#535154"/>
<text x="572.6" y="329.8" font-size="4.8" fill="#f0f0f0" textLength="13.0" lengthAdjust="spacingAndGlyphs" font-weight="bold">Layers</text>
<text x="592.6" y="329.8" font-size="4.6" fill="#8d8b8e" textLength="17.4" lengthAdjust="spacingAndGlyphs">Channels</text>
<text x="618.6" y="329.8" font-size="4.6" fill="#8d8b8e" textLength="10.4" lengthAdjust="spacingAndGlyphs">Paths</text>
<path d="M662 327h3.6M662 328.2h3.6M662 329.4h3.6" fill="none" stroke="#bdbdbd" stroke-width="0.50"/>
<rect x="571.7" y="335.6" width="36.1" height="6.4" fill="#434144"/>
<circle cx="574.6" cy="338.5" r="1.1" fill="none" stroke="#cfcfcf" stroke-width="0.50"/>
<path d="M575.4 339.4l1 1" fill="none" stroke="#cfcfcf" stroke-width="0.50"/>
<text x="578.6" y="340.4" font-size="4.4" fill="#d0d0d0" textLength="8.0" lengthAdjust="spacingAndGlyphs">Kind</text>
<path d="M603.4 338.2l1.1 1.2 1.1 -1.2" fill="none" stroke="#a8a8a8" stroke-width="0.50"/>
<rect x="612.4" y="336.6" width="4.6" height="4.0" fill="none" stroke="#d8d8d8" stroke-width="0.7"/>
<path d="M612.8 339.8l1.4-1.6 1 .9 1.4-1.3" fill="none" stroke="#d8d8d8" stroke-width="0.40"/>
<circle cx="624.8" cy="338.7" r="2.1" fill="none" stroke="#d8d8d8" stroke-width="0.70"/>
<path d="M624.8 336.6a2.1 2.1 0 0 1 0 4.2z" fill="#d8d8d8"/>
<path d="M632.8 336.6h4.6v1.3h-1.6v3.2h-1.4v-3.2h-1.6z" fill="#d8d8d8"/>
<rect x="643.0" y="336.6" width="4.2" height="4.2" fill="none" stroke="#d8d8d8" stroke-width="0.6"/>
<circle cx="643.0" cy="336.6" r="0.7" fill="#d8d8d8"/>
<circle cx="647.2" cy="336.6" r="0.7" fill="#d8d8d8"/>
<circle cx="643.0" cy="340.8" r="0.7" fill="#d8d8d8"/>
<circle cx="647.2" cy="340.8" r="0.7" fill="#d8d8d8"/>
<path d="M653.4 336.4h2.8l1.4 1.4v3.2h-4.2z" fill="#d8d8d8"/>
<circle cx="657.4" cy="340.2" r="1.0" fill="#d8d8d8"/>
<circle cx="664.6" cy="337.4" r="1.4" fill="#f4f4f4"/>
<rect x="571.7" y="345.6" width="53.7" height="6.2" fill="#4a484b"/>
<text x="574.4" y="350.1" font-size="4.2" fill="#858386" textLength="11.6" lengthAdjust="spacingAndGlyphs">Normal</text>
<text x="628.4" y="350.1" font-size="4.2" fill="#807e81" textLength="14.1" lengthAdjust="spacingAndGlyphs">Opacity:</text>
<rect x="645.5" y="345.6" width="20.1" height="6.2" fill="#4a484b"/>
<text x="650.0" y="350.1" font-size="4.0" fill="#7c7a7d" textLength="9.0" lengthAdjust="spacingAndGlyphs">100%</text>
<text x="571.7" y="359.7" font-size="4.2" fill="#8d8b8e" textLength="8.8" lengthAdjust="spacingAndGlyphs">Lock:</text>
<rect x="585.0" y="356.4" width="4.0" height="3.8" fill="none" stroke="#bdbdbd" stroke-width="0.6"/>
<path d="M585 358.3h4M587 356.4v3.8" fill="none" stroke="#bdbdbd" stroke-width="0.40"/>
<path d="M594.8 360.2l3.6 -3.8" fill="none" stroke="#c8c8c8" stroke-width="0.90"/>
<path d="M605.9 356v4.6M603.6 358.3h4.6" fill="none" stroke="#c8c8c8" stroke-width="0.70"/>
<rect x="612.8" y="356.6" width="4.0" height="3.4" fill="none" stroke="#bdbdbd" stroke-width="0.6"/>
<path d="M611.8 357.8h2M616 361v-2" fill="none" stroke="#bdbdbd" stroke-width="0.50"/>
<rect x="622.2" y="358.0" width="3.8" height="2.8" fill="#c8c8c8"/>
<path d="M623 358v-1a1.1 1.1 0 0 1 2.2 0v1" fill="none" stroke="#c8c8c8" stroke-width="0.60"/>
<text x="637.5" y="359.7" font-size="4.2" fill="#807e81" textLength="6.0" lengthAdjust="spacingAndGlyphs">Fill:</text>
<rect x="645.5" y="355.2" width="20.1" height="6.2" fill="#4a484b"/>
<text x="650.0" y="359.7" font-size="4.0" fill="#7c7a7d" textLength="9.0" lengthAdjust="spacingAndGlyphs">100%</text>
<path d="M569 363.6h99.6" fill="none" stroke="#444245" stroke-width="0.60"/>
<ellipse cx="575" cy="370.6" rx="2.5" ry="1.5" fill="none" stroke="#dcdcdc" stroke-width="0.6"/>
<circle cx="575.0" cy="370.6" r="0.8" fill="#dcdcdc"/>
<path d="M580.4 363.8v13.6" fill="none" stroke="#474548" stroke-width="0.40"/>
<rect x="583.0" y="365.4" width="10.8" height="10.4" fill="url(#chk2)" stroke="#dadada" stroke-width="0.5"/>
<text x="598.2" y="372.3" font-size="4.4" fill="#e0e0e0" textLength="4.8" lengthAdjust="spacingAndGlyphs">06</text>
<path d="M569 377.5h93" fill="none" stroke="#474548" stroke-width="0.50"/>
<ellipse cx="575" cy="384.3" rx="2.5" ry="1.5" fill="none" stroke="#dcdcdc" stroke-width="0.6"/>
<circle cx="575.0" cy="384.3" r="0.8" fill="#dcdcdc"/>
<path d="M580.4 377.5v13.6" fill="none" stroke="#474548" stroke-width="0.40"/>
<rect x="583.0" y="379.1" width="10.8" height="10.4" fill="url(#chk2)" stroke="#dadada" stroke-width="0.5"/>
<path d="M597 382.3v1.4M597 384.9v1.4" fill="none" stroke="#cfcfcf" stroke-width="1.10"/>
<rect x="600.0" y="379.1" width="10.8" height="10.4" fill="url(#gMask)" stroke="#bdbdbd" stroke-width="0.4"/>
<text x="615.0" y="386.0" font-size="4.4" fill="#e0e0e0" textLength="5.0" lengthAdjust="spacingAndGlyphs">07</text>
<path d="M569 391.1h93" fill="none" stroke="#474548" stroke-width="0.50"/>
<ellipse cx="575" cy="397.9" rx="2.5" ry="1.5" fill="none" stroke="#dcdcdc" stroke-width="0.6"/>
<circle cx="575.0" cy="397.9" r="0.8" fill="#dcdcdc"/>
<path d="M580.4 391.1v13.6" fill="none" stroke="#474548" stroke-width="0.40"/>
<rect x="583.0" y="392.7" width="10.8" height="10.4" fill="url(#chk2)" stroke="#dadada" stroke-width="0.5"/>
<text x="598.2" y="399.6" font-size="4.4" fill="#e0e0e0" textLength="4.8" lengthAdjust="spacingAndGlyphs">02</text>
<path d="M569 404.8h93" fill="none" stroke="#474548" stroke-width="0.50"/>
<ellipse cx="575" cy="411.6" rx="2.5" ry="1.5" fill="none" stroke="#dcdcdc" stroke-width="0.6"/>
<circle cx="575.0" cy="411.6" r="0.8" fill="#dcdcdc"/>
<path d="M580.4 404.8v13.6" fill="none" stroke="#474548" stroke-width="0.40"/>
<rect x="583.0" y="406.4" width="10.8" height="10.4" fill="url(#chk2)" stroke="#dadada" stroke-width="0.5"/>
<text x="598.2" y="413.3" font-size="4.4" fill="#e0e0e0" textLength="4.8" lengthAdjust="spacingAndGlyphs">03</text>
<path d="M569 418.4h93" fill="none" stroke="#474548" stroke-width="0.50"/>
<ellipse cx="575" cy="425.2" rx="2.5" ry="1.5" fill="none" stroke="#dcdcdc" stroke-width="0.6"/>
<circle cx="575.0" cy="425.2" r="0.8" fill="#dcdcdc"/>
<path d="M580.4 418.4v13.6" fill="none" stroke="#474548" stroke-width="0.40"/>
<rect x="583.0" y="420.0" width="10.8" height="10.4" fill="url(#chk2)" stroke="#dadada" stroke-width="0.5"/>
<text x="598.2" y="426.9" font-size="4.4" fill="#e0e0e0" textLength="4.8" lengthAdjust="spacingAndGlyphs">04</text>
<path d="M569 432.1h93" fill="none" stroke="#474548" stroke-width="0.50"/>
<ellipse cx="575" cy="438.9" rx="2.5" ry="1.5" fill="none" stroke="#dcdcdc" stroke-width="0.6"/>
<circle cx="575.0" cy="438.9" r="0.8" fill="#dcdcdc"/>
<path d="M580.4 432.1v13.6" fill="none" stroke="#474548" stroke-width="0.40"/>
<rect x="583.0" y="433.7" width="10.8" height="10.4" fill="url(#chk2)" stroke="#dadada" stroke-width="0.5"/>
<rect x="585.6" y="435.5" width="5.4" height="6.6" fill="#69c3dc"/>
<rect x="585.6" y="435.5" width="5.4" height="1.8" fill="#43a6c8"/>
<rect x="586.6" y="438.5" width="3.4" height="2.2" fill="#f4a21a"/>
<text x="598.2" y="440.6" font-size="4.4" fill="#e0e0e0" textLength="4.8" lengthAdjust="spacingAndGlyphs">01</text>
<path d="M569 445.8h93" fill="none" stroke="#474548" stroke-width="0.50"/>
<ellipse cx="575" cy="452.6" rx="2.5" ry="1.5" fill="none" stroke="#dcdcdc" stroke-width="0.6"/>
<circle cx="575.0" cy="452.6" r="0.8" fill="#dcdcdc"/>
<path d="M580.4 445.8v13.6" fill="none" stroke="#474548" stroke-width="0.40"/>
<rect x="583.0" y="447.4" width="10.8" height="10.4" fill="url(#chk2)" stroke="#dadada" stroke-width="0.5"/>
<rect x="584.4" y="455.2" width="7.8" height="1.6" fill="#e9e7c0"/>
<path d="M597 450.6v1.4M597 453.2v1.4" fill="none" stroke="#cfcfcf" stroke-width="1.10"/>
<rect x="600.0" y="447.4" width="10.8" height="10.4" fill="#fafafa" stroke="#bdbdbd" stroke-width="0.4"/>
<text x="615.0" y="454.3" font-size="4.4" fill="#e0e0e0" textLength="5.0" lengthAdjust="spacingAndGlyphs">09</text>
<path d="M569 459.4h93" fill="none" stroke="#474548" stroke-width="0.50"/>
<ellipse cx="575" cy="466.2" rx="2.5" ry="1.5" fill="none" stroke="#dcdcdc" stroke-width="0.6"/>
<circle cx="575.0" cy="466.2" r="0.8" fill="#dcdcdc"/>
<path d="M580.4 459.4v13.6" fill="none" stroke="#474548" stroke-width="0.40"/>
<rect x="583.0" y="461.0" width="10.8" height="10.4" fill="url(#chk2)" stroke="#dadada" stroke-width="0.5"/>
<path d="M597 464.2v1.4M597 466.8v1.4" fill="none" stroke="#cfcfcf" stroke-width="1.10"/>
<rect x="600.0" y="461.0" width="10.8" height="10.4" fill="#050505" stroke="#bdbdbd" stroke-width="0.4"/>
<text x="615.0" y="467.9" font-size="4.4" fill="#e0e0e0" textLength="5.0" lengthAdjust="spacingAndGlyphs">08</text>
<rect x="662.4" y="364.0" width="5.4" height="106.0" fill="#4b494c"/>
<rect x="662.8" y="369.0" width="4.6" height="72.0" fill="#69676a"/>
<path d="M664 366.6l1.1 -1.1 1.1 1.1" fill="none" stroke="#a0a0a0" stroke-width="0.50"/>
<path d="M664 467l1.1 1.1 1.1 -1.1" fill="none" stroke="#a0a0a0" stroke-width="0.50"/>
<rect x="569.0" y="470.0" width="99.6" height="8.4" fill="#535154"/>
<path d="M569 470h99.6" fill="none" stroke="#444245" stroke-width="0.60"/>
<path d="M585 473.4a1.4 1.4 0 0 1 2.2 0M586.4 473.4a1.4 1.4 0 0 1 2.2 0" fill="none" stroke="#9a9a9a" stroke-width="0.70"/>
<text x="595.4" y="475.1" font-size="4.4" fill="#a4a4a4" textLength="4.4" lengthAdjust="spacingAndGlyphs">fx</text>
<rect x="605.6" y="471.6" width="5.0" height="3.8" fill="none" stroke="#d8d8d8" stroke-width="0.7"/>
<circle cx="608.1" cy="473.5" r="0.9" fill="#b4b4b4"/>
<circle cx="620.0" cy="473.5" r="2.1" fill="none" stroke="#b4b4b4" stroke-width="0.70"/>
<path d="M620 471.4a2.1 2.1 0 0 1 0 4.2z" fill="#b4b4b4"/>
<path d="M623.6 474.6l.9 .9 .9 -.9" fill="none" stroke="#b4b4b4" stroke-width="0.40"/>
<path d="M629.2 471.8h2l.8 .8h2.6v3h-5.4z" fill="#b4b4b4"/>
<rect x="640.8" y="471.6" width="4.2" height="4.0" fill="none" stroke="#d8d8d8" stroke-width="0.7"/>
<path d="M642.6 475.6l2.4 -2.2v2.2z" fill="#b4b4b4"/>
<path d="M652.2 472.4h3.6M652.7 472.6l.3 3.2h2l.3 -3.2M653.4 471.8h1.2" fill="none" stroke="#8f8d90" stroke-width="0.60"/>
<rect x="670.4" y="141.2" width="165.6" height="188.6" fill="#535154"/>
<rect x="670.4" y="141.2" width="165.6" height="10.2" fill="#454346"/>
<rect x="670.4" y="141.2" width="17.6" height="10.4" fill="#535154"/>
<text x="673.6" y="148.0" font-size="4.8" fill="#f0f0f0" textLength="11.0" lengthAdjust="spacingAndGlyphs" font-weight="bold">Learn</text>
<path d="M818.6 145.4h3.6M818.6 146.6h3.6M818.6 147.8h3.6" fill="none" stroke="#bdbdbd" stroke-width="0.50"/>
<text x="721.0" y="165.8" font-size="7.0" fill="#f2f2f2" textLength="52.8" lengthAdjust="spacingAndGlyphs">Learn Photoshop</text>
<text x="683.0" y="174.8" font-size="5.6" fill="#f2f2f2" textLength="126.8" lengthAdjust="spacingAndGlyphs" font-weight="bold">Step-by-step tutorials directly in the app. Pick a</text>
<text x="719.0" y="182.0" font-size="5.6" fill="#f2f2f2" textLength="56.0" lengthAdjust="spacingAndGlyphs" font-weight="bold">topic below to begin.</text>
<rect x="673.4" y="190.4" width="147.6" height="20.8" fill="#2b2a2c" rx="1"/>
<text x="721.9" y="203.0" font-size="6.0" fill="#f2f2f2" textLength="35.1" lengthAdjust="spacingAndGlyphs">Photography</text>
<path d="M811.2 198.4l2.2 2.4l-2.2 2.4" fill="none" stroke="#d0d0d0" stroke-width="0.70"/>
<rect x="673.4" y="215.2" width="147.6" height="20.8" fill="#2b2a2c" rx="1"/>
<text x="721.9" y="227.8" font-size="6.0" fill="#f2f2f2" textLength="29.7" lengthAdjust="spacingAndGlyphs">Retouching</text>
<path d="M811.2 223.2l2.2 2.4l-2.2 2.4" fill="none" stroke="#d0d0d0" stroke-width="0.70"/>
<rect x="673.4" y="240.0" width="147.6" height="20.8" fill="#2b2a2c" rx="1"/>
<text x="721.9" y="252.6" font-size="6.0" fill="#f2f2f2" textLength="48.7" lengthAdjust="spacingAndGlyphs">Combining Images</text>
<path d="M811.2 248.0l2.2 2.4l-2.2 2.4" fill="none" stroke="#d0d0d0" stroke-width="0.70"/>
<rect x="673.4" y="264.8" width="147.6" height="20.8" fill="#2b2a2c" rx="1"/>
<text x="721.9" y="277.4" font-size="6.0" fill="#f2f2f2" textLength="42.5" lengthAdjust="spacingAndGlyphs">Graphic Design</text>
<path d="M811.2 272.8l2.2 2.4l-2.2 2.4" fill="none" stroke="#d0d0d0" stroke-width="0.70"/>
<rect x="673.4" y="190.4" width="42.4" height="20.8" fill="#e9e6e2"/>
<rect x="673.4" y="204.9" width="42.4" height="6.3" fill="#f4f2ee"/>
<ellipse cx="690.4" cy="195.6" rx="4.2" ry="3.6" fill="#2c2220"/>
<ellipse cx="691" cy="203.2" rx="6" ry="5.4" fill="#f3f3f3"/>
<circle cx="691.6" cy="197.0" r="2.0" fill="#c49a80"/>
<rect x="685.0" y="205.6" width="17.0" height="3.2" fill="#5c7f2c"/>
<rect x="686.0" y="207.8" width="8.0" height="2.0" fill="#e2b21a"/>
<rect x="699.0" y="206.8" width="7.0" height="2.2" fill="#c2457c"/>
<rect x="700.0" y="199.4" width="6.0" height="5.0" fill="#dfe6ea"/>
<rect x="673.4" y="215.2" width="42.4" height="20.8" fill="#d9a86c"/>
<rect x="673.4" y="215.2" width="42.4" height="7.4" fill="#e8e0d6"/>
<rect x="673.4" y="215.2" width="10.6" height="6.0" fill="#b9bfc4"/>
<ellipse cx="695" cy="224.8" rx="5.4" ry="3.8" fill="#2a2c2a"/>
<rect x="688.0" y="228.6" width="15.0" height="7.4" fill="#e5b67a"/>
<path d="M687 227.2q3 4 -2 6" fill="none" stroke="#d6cf3a" stroke-width="0.90"/>
<rect x="673.4" y="240.0" width="42.4" height="20.8" fill="#3a3030"/>
<rect x="673.4" y="251.0" width="16.6" height="7.6" fill="#cfd2d6"/>
<rect x="680.0" y="243.0" width="8.0" height="5.0" fill="#c9b79c"/>
<ellipse cx="703" cy="249.0" rx="7" ry="8" fill="#54403a"/>
<circle cx="703.0" cy="244.6" r="2.8" fill="#20181a"/>
<rect x="673.4" y="258.6" width="42.4" height="2.2" fill="#5c4a40"/>
<rect x="673.4" y="264.8" width="42.4" height="20.8" fill="#4a4a4c"/>
<path d="M673.4 267.8h34l8.4 7v7h-42.4z" fill="#2a2a2c"/>
<path d="M684 285.6l14 -11l9 4l-6 11z" fill="#121214"/>
<rect x="673.4" y="264.8" width="42.4" height="3.4" fill="#222224"/>
<ellipse cx="694" cy="278.2" rx="5" ry="4" fill="#6e5a50"/>
<rect x="670.4" y="327.6" width="165.6" height="2.4" fill="#403e41"/>
<rect x="670.4" y="330.0" width="165.6" height="148.4" fill="#535154"/>
<rect x="670.4" y="362.0" width="165.6" height="116.4" fill="#4d4b4e"/>
<rect x="670.4" y="330.0" width="165.6" height="9.8" fill="#454346"/>
<rect x="670.4" y="330.0" width="24.0" height="10.0" fill="#535154"/>
<text x="673.6" y="336.6" font-size="4.8" fill="#f0f0f0" textLength="17.4" lengthAdjust="spacingAndGlyphs" font-weight="bold">Libraries</text>
<path d="M818.6 334h3.6M818.6 335.2h3.6M818.6 336.4h3.6" fill="none" stroke="#bdbdbd" stroke-width="0.50"/>
<rect x="673.0" y="342.8" width="124.6" height="6.6" fill="#4b494c"/>
<path d="M792.6 345.6l1.1 1.2 1.1 -1.2" fill="none" stroke="#777" stroke-width="0.50"/>
<rect x="801.4" y="342.4" width="8.2" height="7.6" fill="#2f2e30" stroke="#777" stroke-width="0.4"/>
<rect x="803.2" y="343.8" width="4.6" height="4.8" fill="#e8e8e8"/>
<path d="M805.5 343.8v4.8M803.2 346.2h4.6" fill="none" stroke="#2f2e30" stroke-width="0.60"/>
<rect x="813.6" y="343.4" width="5.6" height="5.4" fill="none" stroke="#cfcfcf" stroke-width="0.6"/>
<path d="M813.6 345.2h5.6M813.6 347h5.6" fill="none" stroke="#cfcfcf" stroke-width="0.60"/>
<circle cx="675.0" cy="355.8" r="1.5" fill="none" stroke="#e0e0e0" stroke-width="0.70"/>
<path d="M673.9 357l-1.2 1.4" fill="none" stroke="#e0e0e0" stroke-width="0.70"/>
<text x="680.0" y="357.8" font-size="4.2" fill="#6e6c6f" textLength="36.0" lengthAdjust="spacingAndGlyphs">Search Adobe Stock</text>
<path d="M673 360.2h147" fill="none" stroke="#605e61" stroke-width="0.50"/>
<path d="M815.4 355.8l1.1 1.2 1.1 -1.2" fill="none" stroke="#777" stroke-width="0.50"/>
<g transform="translate(747.2 410.4) scale(.9) translate(-748.2 -407.2)">
<path d="M741 413.4a4.6 4.6 0 0 1 1.4 -9a5.6 5.6 0 0 1 10 -1.4a5.2 5.2 0 0 1 3.4 9.6a6 6 0 0 1 -3 .8z" fill="none" stroke="#8f8d90" stroke-width="0.90"/>
<path d="M744 409.6a3 3 0 0 1 4.6 -3.6l4.4 4.2M751.6 404.4a3 3 0 0 1 2.4 5.2" fill="none" stroke="#8f8d90" stroke-width="0.80"/>
</g>
<text x="714.6" y="423.7" font-size="4.3" fill="#8b898c" textLength="64.2" lengthAdjust="spacingAndGlyphs">To use Creative Cloud Libraries,</text>
<text x="714.6" y="429.3" font-size="4.3" fill="#8b898c" textLength="64.2" lengthAdjust="spacingAndGlyphs">please sign in to Creative Cloud</text>
<path d="M800.4 475.4a1.8 1.8 0 0 1 .4 -3.4a2.4 2.4 0 0 1 4.4 0a1.8 1.8 0 0 1 .6 3.4z" fill="#e4e4e4"/>
<path d="M812 472.4h3.6M812.5 472.6l.3 3.2h2l.3 -3.2M813.2 471.8h1.2" fill="none" stroke="#8f8d90" stroke-width="0.60"/>
<rect x="182.5" y="186.0" width="231.5" height="247.3" fill="url(#chk)"/>
<rect x="461.8" y="139.6" width="90.2" height="120.6" fill="#39373a"/>
<rect x="462.6" y="140.4" width="88.8" height="119.2" fill="#535154"/>
<rect x="462.6" y="140.4" width="88.8" height="10.6" fill="#454346"/>
<rect x="486.6" y="140.4" width="23.0" height="10.8" fill="#535154"/>
<text x="466.0" y="147.6" font-size="4.6" fill="#8d8b8e" textLength="15.0" lengthAdjust="spacingAndGlyphs">History</text>
<text x="489.6" y="147.6" font-size="4.8" fill="#f2f2f2" textLength="16.8" lengthAdjust="spacingAndGlyphs" font-weight="bold">Actions</text>
<path d="M534.6 145.2l1.4 1.2l-1.4 1.2M536.6 145.2l1.4 1.2l-1.4 1.2" fill="none" stroke="#bdbdbd" stroke-width="0.50"/>
<path d="M541.4 144.6v3.4" fill="none" stroke="#8a8a8a" stroke-width="0.50"/>
<path d="M545 145h3.6M545 146.2h3.6M545 147.4h3.6" fill="none" stroke="#bdbdbd" stroke-width="0.50"/>
<path d="M462.6 157.2h83" fill="none" stroke="#49474a" stroke-width="0.50"/>
<path d="M465.4 153.9l1.3 1.5l2.6 -3.2" fill="none" stroke="#f4f4f4" stroke-width="0.90"/>
<rect x="474.0" y="151.5" width="4.6" height="4.6" fill="none" stroke="#4b494c" stroke-width="0.5"/>
<path d="M483.2 152.2l1.4 1.5l-1.4 1.5" fill="none" stroke="#a8a8a8" stroke-width="0.50"/>
<path d="M490 151.5h2l.7 .8h2.9v3.4h-5.6z" fill="#f2f2f2"/>
<text x="500.0" y="155.2" font-size="4.1" fill="#e4e4e4" textLength="9.4" lengthAdjust="spacingAndGlyphs">SCN7</text>
<path d="M462.6 164.2h83" fill="none" stroke="#49474a" stroke-width="0.50"/>
<path d="M465.4 160.9l1.3 1.5l2.6 -3.2" fill="none" stroke="#f4f4f4" stroke-width="0.90"/>
<rect x="474.0" y="158.5" width="4.6" height="4.6" fill="none" stroke="#4b494c" stroke-width="0.5"/>
<path d="M483.2 159.2l1.4 1.5l-1.4 1.5" fill="none" stroke="#a8a8a8" stroke-width="0.50"/>
<path d="M490 158.5h2l.7 .8h2.9v3.4h-5.6z" fill="#f2f2f2"/>
<text x="500.0" y="162.2" font-size="4.1" fill="#e4e4e4" textLength="9.6" lengthAdjust="spacingAndGlyphs">SCN8</text>
<path d="M462.6 171.3h83" fill="none" stroke="#49474a" stroke-width="0.50"/>
<path d="M465.4 168.0l1.3 1.5l2.6 -3.2" fill="none" stroke="#f4f4f4" stroke-width="0.90"/>
<rect x="474.0" y="165.6" width="4.6" height="4.6" fill="none" stroke="#4b494c" stroke-width="0.5"/>
<path d="M483.2 166.3l1.4 1.5l-1.4 1.5" fill="none" stroke="#a8a8a8" stroke-width="0.50"/>
<path d="M490 165.6h2l.7 .8h2.9v3.4h-5.6z" fill="#f2f2f2"/>
<text x="500.0" y="169.3" font-size="4.1" fill="#e4e4e4" textLength="9.6" lengthAdjust="spacingAndGlyphs">SCN9</text>
<path d="M462.6 178.3h83" fill="none" stroke="#49474a" stroke-width="0.50"/>
<path d="M465.4 175.0l1.3 1.5l2.6 -3.2" fill="none" stroke="#f4f4f4" stroke-width="0.90"/>
<rect x="474.0" y="172.6" width="4.6" height="4.6" fill="none" stroke="#4b494c" stroke-width="0.5"/>
<path d="M483.2 173.3l1.4 1.5l-1.4 1.5" fill="none" stroke="#a8a8a8" stroke-width="0.50"/>
<path d="M490 172.6h2l.7 .8h2.9v3.4h-5.6z" fill="#f2f2f2"/>
<text x="500.0" y="176.3" font-size="4.1" fill="#e4e4e4" textLength="12.0" lengthAdjust="spacingAndGlyphs">SCN10</text>
<path d="M462.6 185.3h83" fill="none" stroke="#49474a" stroke-width="0.50"/>
<path d="M465.4 182.0l1.3 1.5l2.6 -3.2" fill="none" stroke="#f4f4f4" stroke-width="0.90"/>
<rect x="474.0" y="179.6" width="4.6" height="4.6" fill="none" stroke="#4b494c" stroke-width="0.5"/>
<path d="M483.2 180.3l1.4 1.5l-1.4 1.5" fill="none" stroke="#a8a8a8" stroke-width="0.50"/>
<path d="M490 179.6h2l.7 .8h2.9v3.4h-5.6z" fill="#f2f2f2"/>
<text x="500.0" y="183.3" font-size="4.1" fill="#e4e4e4" textLength="12.0" lengthAdjust="spacingAndGlyphs">SCN11</text>
<path d="M462.6 192.3h83" fill="none" stroke="#49474a" stroke-width="0.50"/>
<path d="M465.4 189.0l1.3 1.5l2.6 -3.2" fill="none" stroke="#f4f4f4" stroke-width="0.90"/>
<rect x="474.0" y="186.7" width="4.6" height="4.6" fill="none" stroke="#4b494c" stroke-width="0.5"/>
<path d="M483.2 187.3l1.4 1.5l-1.4 1.5" fill="none" stroke="#a8a8a8" stroke-width="0.50"/>
<path d="M490 186.7h2l.7 .8h2.9v3.4h-5.6z" fill="#f2f2f2"/>
<text x="500.0" y="190.3" font-size="4.1" fill="#e4e4e4" textLength="9.6" lengthAdjust="spacingAndGlyphs">BOX7</text>
<path d="M462.6 199.4h83" fill="none" stroke="#49474a" stroke-width="0.50"/>
<path d="M465.4 196.1l1.3 1.5l2.6 -3.2" fill="none" stroke="#f4f4f4" stroke-width="0.90"/>
<rect x="474.0" y="193.7" width="4.6" height="4.6" fill="none" stroke="#4b494c" stroke-width="0.5"/>
<path d="M483.2 194.4l1.4 1.5l-1.4 1.5" fill="none" stroke="#a8a8a8" stroke-width="0.50"/>
<path d="M490 193.7h2l.7 .8h2.9v3.4h-5.6z" fill="#f2f2f2"/>
<text x="500.0" y="197.4" font-size="4.1" fill="#e4e4e4" textLength="10.4" lengthAdjust="spacingAndGlyphs">HAOL</text>
<path d="M462.6 206.4h83" fill="none" stroke="#49474a" stroke-width="0.50"/>
<path d="M465.4 203.1l1.3 1.5l2.6 -3.2" fill="none" stroke="#f4f4f4" stroke-width="0.90"/>
<rect x="474.0" y="200.7" width="4.6" height="4.6" fill="none" stroke="#4b494c" stroke-width="0.5"/>
<path d="M483.2 201.4l1.4 1.5l-1.4 1.5" fill="none" stroke="#a8a8a8" stroke-width="0.50"/>
<path d="M490 200.7h2l.7 .8h2.9v3.4h-5.6z" fill="#f2f2f2"/>
<text x="500.0" y="204.4" font-size="4.1" fill="#e4e4e4" textLength="12.4" lengthAdjust="spacingAndGlyphs">BRAND</text>
<path d="M462.6 213.4h83" fill="none" stroke="#49474a" stroke-width="0.50"/>
<path d="M465.4 210.1l1.3 1.5l2.6 -3.2" fill="none" stroke="#f4f4f4" stroke-width="0.90"/>
<rect x="474.0" y="207.7" width="4.6" height="4.6" fill="none" stroke="#4b494c" stroke-width="0.5"/>
<path d="M483.2 208.4l1.4 1.5l-1.4 1.5" fill="none" stroke="#a8a8a8" stroke-width="0.50"/>
<path d="M490 207.7h2l.7 .8h2.9v3.4h-5.6z" fill="#f2f2f2"/>
<text x="500.0" y="211.4" font-size="4.1" fill="#e4e4e4" textLength="12.4" lengthAdjust="spacingAndGlyphs">PRK16</text>
<path d="M462.6 220.5h83" fill="none" stroke="#49474a" stroke-width="0.50"/>
<path d="M465.4 217.2l1.3 1.5l2.6 -3.2" fill="none" stroke="#f4f4f4" stroke-width="0.90"/>
<rect x="474.0" y="214.8" width="4.6" height="4.6" fill="none" stroke="#4b494c" stroke-width="0.5"/>
<path d="M482.4 216.3l1.5 1.4l1.5 -1.4" fill="none" stroke="#a8a8a8" stroke-width="0.50"/>
<path d="M490 214.8h2l.7 .8h2.9v3.4h-5.6z" fill="#f2f2f2"/>
<text x="500.0" y="218.5" font-size="4.1" fill="#e4e4e4" textLength="9.6" lengthAdjust="spacingAndGlyphs">BOX2</text>
<path d="M462.6 227.5h83" fill="none" stroke="#49474a" stroke-width="0.50"/>
<path d="M465.4 224.2l1.3 1.5l2.6 -3.2" fill="none" stroke="#f4f4f4" stroke-width="0.90"/>
<rect x="474.0" y="221.8" width="4.6" height="4.6" fill="none" stroke="#4b494c" stroke-width="0.5"/>
<rect x="494.6" y="220.8" width="49.6" height="6.5" fill="#6b696c"/>
<path d="M490.6 222.5l1.4 1.5l-1.4 1.5" fill="none" stroke="#a8a8a8" stroke-width="0.50"/>
<text x="497.3" y="225.5" font-size="4.2" fill="#e4e4e4" textLength="29.2" lengthAdjust="spacingAndGlyphs">Step 1 :: To web</text>
<path d="M462.6 234.5h83" fill="none" stroke="#49474a" stroke-width="0.50"/>
<path d="M465.4 231.2l1.3 1.5l2.6 -3.2" fill="none" stroke="#f4f4f4" stroke-width="0.90"/>
<rect x="474.0" y="228.8" width="4.6" height="4.6" fill="none" stroke="#4b494c" stroke-width="0.5"/>
<path d="M490.6 229.5l1.4 1.5l-1.4 1.5" fill="none" stroke="#a8a8a8" stroke-width="0.50"/>
<text x="497.3" y="232.6" font-size="4.2" fill="#e4e4e4" textLength="30.6" lengthAdjust="spacingAndGlyphs">Step 2 :: Render</text>
<path d="M462.6 241.6h83" fill="none" stroke="#49474a" stroke-width="0.50"/>
<path d="M465.4 238.3l1.3 1.5l2.6 -3.2" fill="none" stroke="#f4f4f4" stroke-width="0.90"/>
<rect x="474.0" y="235.9" width="4.6" height="4.6" fill="none" stroke="#4b494c" stroke-width="0.5"/>
<path d="M483.2 236.6l1.4 1.5l-1.4 1.5" fill="none" stroke="#a8a8a8" stroke-width="0.50"/>
<path d="M490 235.9h2l.7 .8h2.9v3.4h-5.6z" fill="#f2f2f2"/>
<text x="500.0" y="239.6" font-size="4.1" fill="#e4e4e4" textLength="9.6" lengthAdjust="spacingAndGlyphs">BOX7</text>
<path d="M462.6 248.6h83" fill="none" stroke="#49474a" stroke-width="0.50"/>
<path d="M465.4 245.3l1.3 1.5l2.6 -3.2" fill="none" stroke="#f4f4f4" stroke-width="0.90"/>
<rect x="474.0" y="242.9" width="4.6" height="4.6" fill="none" stroke="#4b494c" stroke-width="0.5"/>
<path d="M483.2 243.6l1.4 1.5l-1.4 1.5" fill="none" stroke="#a8a8a8" stroke-width="0.50"/>
<path d="M490 242.9h2l.7 .8h2.9v3.4h-5.6z" fill="#f2f2f2"/>
<text x="500.0" y="246.6" font-size="4.1" fill="#e4e4e4" textLength="9.6" lengthAdjust="spacingAndGlyphs">BOX1</text>
<path d="M471.4 151v96M480.6 151v96" fill="none" stroke="#49474a" stroke-width="0.50"/>
<rect x="545.4" y="151.0" width="4.6" height="96.0" fill="#4b494c"/>
<rect x="545.8" y="217.4" width="3.8" height="26.2" fill="#6c6a6d"/>
<path d="M546.6 156.4l1.1 -1.1 1.1 1.1" fill="none" stroke="#9a9a9a" stroke-width="0.50"/>
<path d="M546.6 245l1.1 .9 1.1 -.9" fill="none" stroke="#9a9a9a" stroke-width="0.40"/>
<rect x="462.6" y="247.0" width="88.8" height="12.6" fill="#535154"/>
<path d="M462.6 247h88.8" fill="none" stroke="#444245" stroke-width="0.60"/>
<rect x="473.2" y="251.8" width="2.4" height="2.4" fill="#8d8b8e"/>
<circle cx="486.7" cy="253.0" r="1.7" fill="#e2e2e2"/>
<path d="M497.6 251l3.8 2l-3.8 2z" fill="#e8e8e8"/>
<path d="M508.6 251.2h2l.7 .8h2.9v3.2h-5.6z" fill="#e2e2e2"/>
<rect x="522.4" y="251.0" width="4.0" height="4.2" fill="none" stroke="#e2e2e2" stroke-width="0.7"/>
<path d="M524.2 255.2l2.2 -2v2z" fill="#e2e2e2"/>
<path d="M534.2 251.4h3.8M534.7 251.6l.3 3.8h2.2l.3 -3.8M535.4 250.8h1.4" fill="none" stroke="#c8c8c8" stroke-width="0.70"/>
<rect x="12.0" y="478.7" width="824.0" height="27.3" fill="#0d111b"/>
<path d="M29.8 484.2l3.4 -.5v3.5h-3.4zM33.8 483.6l4.2 -.6v4.2h-4.2zM29.8 487.8h3.4v3.5l-3.4 -.5zM33.8 487.8h4.2v4.2l-4.2 -.6z" fill="#f4f4f4"/>
<rect x="45.6" y="478.7" width="180.4" height="27.3" fill="#a4a6a8"/>
<rect x="45.6" y="478.7" width="180.4" height="16.7" fill="#f1f1f1"/>
<circle cx="56.6" cy="487.0" r="3.9" fill="none" stroke="#2a2a2a" stroke-width="1.50"/>
<text x="68.0" y="489.6" font-size="7.2" fill="#5a5a5a" textLength="62.6" lengthAdjust="spacingAndGlyphs">Type here to search</text>
<path d="M214.4 484.4a1.1 1.1 0 0 1 2.2 0v2.6a1.1 1.1 0 0 1 -2.2 0z" fill="#3c3c3c"/>
<path d="M213.4 487a2.1 2.1 0 0 0 4.2 0M215.5 489.2v1.6" fill="none" stroke="#3c3c3c" stroke-width="0.60"/>
<rect x="236.4" y="484.0" width="4.4" height="6.0" fill="none" stroke="#e8e8e8" stroke-width="0.8"/>
<path d="M234.6 485v4M242.6 485v4" fill="none" stroke="#e8e8e8" stroke-width="0.80"/>
<text x="262.6" y="491.6" font-size="14" font-weight="bold" fill="#1e83dc" text-anchor="middle" font-family="Liberation Sans, sans-serif">e</text>
<path d="M281.5 482.6h3.2l1 1.2h4v7h-8.2z" fill="#f0c64e"/>
<rect x="281.5" y="485.0" width="8.2" height="5.8" fill="#f6d978"/>
<path d="M304.9 482.6h3.2l1 1.2h4v7h-8.2z" fill="#f0c64e"/>
<rect x="304.9" y="485.0" width="8.2" height="5.8" fill="#f6d978"/>
<rect x="286.4" y="486.2" width="4.0" height="4.2" fill="#3d8fe0"/>
<rect x="327.8" y="484.4" width="9.2" height="7.2" fill="#f4f4f4"/>
<path d="M330.2 484.4v-1.4a2.2 2.2 0 0 1 4.4 0v1.4" fill="none" stroke="#f4f4f4" stroke-width="0.80"/>
<rect x="330.2" y="486.0" width="2.0" height="2.0" fill="#e8492e"/>
<rect x="332.8" y="486.0" width="2.0" height="2.0" fill="#7bb83a"/>
<rect x="330.2" y="488.6" width="2.0" height="2.0" fill="#2c8fe0"/>
<rect x="332.8" y="488.6" width="2.0" height="2.0" fill="#f2b81e"/>
<rect x="350.4" y="482.2" width="10.2" height="9.6" fill="#f0f2ee"/>
<text x="355.5" y="491" font-size="10" font-weight="bold" fill="#2f7d32" text-anchor="middle">C</text>
<circle cx="380.6" cy="487.0" r="4.6" fill="#f28a1c"/>
<circle cx="381.2" cy="487.4" r="2.8" fill="#3f58c8"/>
<path d="M376.2 485.4a4.6 4.6 0 0 0 7.4 5.6a5 5 0 0 1 -7.4 -5.6z" fill="#e8421c"/>
<rect x="398.2" y="482.8" width="10.6" height="8.6" fill="#d8431f"/>
<text x="403.4" y="490" font-size="7.6" font-weight="bold" fill="#fff" text-anchor="middle">P</text>
<circle cx="426.0" cy="487.0" r="4.6" fill="#e8c21a"/>
<path d="M426.0 487L422.0 484.7A4.6 4.6 0 0 1 430.0 484.7z" fill="#de3c2e"/>
<path d="M426.0 487L422.0 484.7A4.6 4.6 0 0 0 426.0 491.6z" fill="#3aa24a"/>
<circle cx="426.0" cy="487.0" r="2.0" fill="#3f7ce0" stroke="#f4f4f4" stroke-width="0.70"/>
<circle cx="450.0" cy="487.0" r="4.6" fill="#e8c21a"/>
<path d="M450.0 487L446.0 484.7A4.6 4.6 0 0 1 454.0 484.7z" fill="#de3c2e"/>
<path d="M450.0 487L446.0 484.7A4.6 4.6 0 0 0 450.0 491.6z" fill="#3aa24a"/>
<circle cx="450.0" cy="487.0" r="2.0" fill="#3f7ce0" stroke="#f4f4f4" stroke-width="0.70"/>
<rect x="467.6" y="483.6" width="10.4" height="7.0" fill="#f2f2f2"/>
<path d="M467.6 483.6l5.2 3.8l5.2 -3.8" fill="none" stroke="#222" stroke-width="0.80"/>
<ellipse cx="492.7" cy="487" rx="4" ry="4.8" fill="none" stroke="#e21a2c" stroke-width="2.2"/>
<path d="M508.4 483.2h7.6l-1.2 7.8h-7.6z" fill="#a8d6ee"/>
<path d="M509.4 485h4.6M509.2 487h4.6" fill="none" stroke="#6aa6c8" stroke-width="0.50"/>
<circle cx="534.4" cy="486.4" r="4.5" fill="#1aa0e4"/>
<text x="534.4" y="489.2" font-size="7" font-weight="bold" fill="#fff" text-anchor="middle">S</text>
<circle cx="538.2" cy="490.6" r="1.8" fill="#e8b820"/>
<rect x="553.0" y="482.8" width="10.6" height="8.6" fill="#2a5caa"/>
<text x="558.3" y="490" font-size="7.4" font-weight="bold" fill="#fff" text-anchor="middle">W</text>
<path d="M580.4 482.4h5.8l2.6 2.6v7h-8.4z" fill="#f4f4f4"/>
<rect x="578.6" y="482.6" width="7.0" height="2.8" fill="#d8231f"/>
<path d="M582.6 490.4q1.6 -2.6 2.2 -4.2q.8 2.4 2.6 3.4q-2.6 .2 -4.8 .8" fill="none" stroke="#d8231f" stroke-width="0.70"/>
<rect x="597.6" y="478.7" width="23.9" height="16.3" fill="#343a48"/>
<rect x="603.0" y="482.2" width="12.0" height="9.6" fill="#0b2435" stroke="#1f7298" stroke-width="0.9"/>
<text x="609" y="489.6" font-size="6.4" font-weight="bold" fill="#2a8fc0" text-anchor="middle">Ps</text>
<rect x="628.6" y="482.2" width="11.2" height="9.6" fill="#4fa636"/>
<text x="634.2" y="490.8" font-size="9.6" font-weight="bold" fill="#f2f6ee" text-anchor="middle">C</text>
<path d="M651.6 487.6l6.4 -5.4l6.2 4.4l-6.4 5.4z" fill="#4c8ed0"/>
<path d="M653.6 487.4l4.6 -3.8l4 2.8l-4.6 3.8z" fill="#9cc6ec"/>
<rect x="678.6" y="482.0" width="9.2" height="10.0" fill="#f2f2f2"/>
<path d="M680.4 486h5.6M680.4 488h5.6M680.4 490h5.6M682.2 485v6M684.2 485v6" fill="none" stroke="#3a3a4a" stroke-width="0.50"/>
<rect x="680.0" y="483.2" width="6.4" height="1.6" fill="#3a3a4a"/>
<circle cx="709.6" cy="485.8" r="1.3" fill="#e0e0e0"/>
<path d="M707.4 490.4a2.2 2.2 0 0 1 4.4 0z" fill="#e0e0e0"/>
<circle cx="713.0" cy="484.6" r="1.0" fill="#bcbcbc"/>
<path d="M711.8 488a1.6 1.6 0 0 1 3 .4" fill="none" stroke="#bcbcbc" stroke-width="0.60"/>
<path d="M727.6 488.4l2.4 -2.4 2.4 2.4" fill="none" stroke="#e8e8e8" stroke-width="0.80"/>
<path d="M739.6 486h1.4l1.8 -1.6v5.2l-1.8 -1.6h-1.4z" fill="#e8e8e8"/>
<path d="M744.2 485.4a2.2 2.2 0 0 1 0 3.2M745.4 484.4a3.6 3.6 0 0 1 0 5.2" fill="none" stroke="#e8e8e8" stroke-width="0.50"/>
<rect x="752.6" y="484.0" width="7.4" height="5.0" fill="none" stroke="#e8e8e8" stroke-width="0.8"/>
<path d="M754.6 490.4h3.4M751.4 488v2.6" fill="none" stroke="#e8e8e8" stroke-width="0.70"/>
<text x="767.4" y="486.0" font-size="5.4" fill="#f2f2f2" textLength="24.6" lengthAdjust="spacingAndGlyphs">10:36 PM</text>
<text x="766.0" y="493.0" font-size="5.4" fill="#f2f2f2" textLength="27.0" lengthAdjust="spacingAndGlyphs">9/29/2018</text>
<rect x="802.6" y="483.4" width="8.8" height="6.2" fill="none" stroke="#e8e8e8" stroke-width="0.8"/>
<path d="M804.6 489.6v1.8l1.8 -1.8" fill="none" stroke="#e8e8e8" stroke-width="0.70"/>
<rect x="822.6" y="478.4" width="0.6" height="17.0" fill="#5a6068"/>
<rect x="275.2" y="494.9" width="20.8" height="11.1" fill="#7fbdec"/>
<rect x="298.6" y="494.9" width="20.8" height="11.1" fill="#7fbdec"/>
<rect x="345.1" y="494.9" width="20.8" height="11.1" fill="#7fbdec"/>
<rect x="370.2" y="494.9" width="20.8" height="11.1" fill="#7fbdec"/>
<rect x="415.6" y="494.9" width="20.8" height="11.1" fill="#7fbdec"/>
<rect x="439.6" y="494.9" width="20.8" height="11.1" fill="#7fbdec"/>
<rect x="462.4" y="494.9" width="20.8" height="11.1" fill="#7fbdec"/>
<rect x="524.0" y="494.9" width="20.8" height="11.1" fill="#7fbdec"/>
<rect x="547.9" y="494.9" width="20.8" height="11.1" fill="#7fbdec"/>
<rect x="574.0" y="494.9" width="20.8" height="11.1" fill="#7fbdec"/>
<rect x="623.8" y="494.9" width="20.8" height="11.1" fill="#7fbdec"/>
<rect x="647.6" y="494.9" width="20.8" height="11.1" fill="#7fbdec"/>
<rect x="672.6" y="494.9" width="20.8" height="11.1" fill="#7fbdec"/>
<rect x="597.6" y="494.7" width="23.9" height="11.3" fill="#9fd0f6"/>
</svg>
<svg class="abs" style="left:0;top:0" width="846" height="497" viewBox="0 0 846 497">
<defs>
<linearGradient id="gSp" x1="0" y1="0" x2="1" y2="0"><stop offset="0" stop-color="#dcdce0"/><stop offset="1" stop-color="#f0f0f2"/></linearGradient>
<linearGradient id="gRf" x1="0" y1="0" x2="0" y2="1"><stop offset="0" stop-color="#e8f5fa" stop-opacity=".9"/><stop offset=".6" stop-color="#f6fbfd" stop-opacity=".7"/><stop offset="1" stop-color="#ffffff" stop-opacity="0"/></linearGradient>
<linearGradient id="gRy" x1="0" y1="0" x2="0" y2="1"><stop offset="0" stop-color="#f2ee7a" stop-opacity=".55"/><stop offset="1" stop-color="#f2ee7a" stop-opacity="0"/></linearGradient>
<filter id="bl"><feGaussianBlur stdDeviation="2.2"/></filter>
</defs>
<ellipse cx="226" cy="379" rx="20" ry="5" fill="#77777c" opacity=".14" filter="url(#bl)"/>
<polygon points="238,382 247.5,385.5 384.5,368.5 386,408 247.5,428 238,424" fill="url(#gRf)"/>
<polygon points="289,388 352,380 352,408 289,418" fill="url(#gRy)"/>
<polygon points="237,215.5 247,214 247.5,385.5 238,382" fill="url(#gSp)"/>
</svg>
<svg id="cover" width="140" height="171" viewBox="0 0 140 171" font-family="Liberation Sans, sans-serif">
<defs><linearGradient id="cvA" x1="0" y1="0" x2="1" y2="0"><stop offset="0" stop-color="#74cae0"/><stop offset="1" stop-color="#8ad6e6"/></linearGradient><linearGradient id="cvB" x1="0" y1="0" x2="1" y2="0"><stop offset="0" stop-color="#49abce"/><stop offset=".6" stop-color="#55b5d3"/><stop offset="1" stop-color="#7ccde0"/></linearGradient></defs>
<rect width="140" height="171" fill="url(#cvA)"/>
<polygon points="0,0 140,0 140,25.2 0,24.9" fill="url(#cvB)"/>
<polygon points="0,150.1 140,152.9 140,171 0,171" fill="#54afd0"/>
<polygon points="2.1 112.2 3.9 107.8 6.0 105.8 5.3 102.7 8.2 99.7 11.4 97.3 14.6 98.3 16.5 95.5 20.5 94.4 24.2 96.2 35.5 95.4 49.1 96.4 52.7 98.3 55.2 101.5 52.8 104.5 49.2 106.0 49.2 114.4 45.3 113.7 41.7 115.7 38.6 114.6 36.7 117.5 34.8 121.3 32.5 124.1 30.6 127.9 28.0 130.2 24.2 132.0 20.5 130.4 16.5 131.3 12.1 129.7 9.6 126.9 7.8 123.0 5.3 120.7 2.8 117.2" fill="#f59b18"/>
<polygon points="78.0 99.4 80.6 96.7 84.4 95.1 87.9 96.1 91.0 93.0 95.4 92.2 99.9 90.0 105.8 91.1 111.3 89.4 118.3 90.6 125.5 93.7 131.8 95.8 135.3 99.9 134.0 105.2 136.0 110.7 131.2 115.3 128.3 119.5 125.5 122.2 123.6 127.0 121.8 132.1 118.5 136.7 114.3 138.8 110.5 136.0 108.6 131.1 107.2 126.2 103.9 122.2 100.2 120.5 96.1 117.4 91.2 115.3 86.8 111.7 82.8 108.8 79.8 104.5" fill="#f59b18"/>
<polygon points="10.7 104.0 15.0 102.5 19.0 104.4 19.7 107.8 15.7 109.3 11.7 107.8" fill="#7acde2"/>
<polygon points="20.5 116.4 23.8 115.8 24.6 118.8 21.6 119.9" fill="#7acde2"/>
<polygon points="95.5 101.5 101.8 100.4 103.7 104.7 98.3 106.3" fill="#7acde2"/>
<polygon points="26.0 100.5 35.5 99.3 39.4 105.5 29.8 109.3" fill="#f7ab3a"/>
<polygon points="114.0 119.1 121.1 117.6 122.2 124.4 117.0 126.9" fill="#f7ab3a"/>
<path d="M4.2 122.3Q6.2 139.4 18.7 139.4" fill="none" stroke="#bfe6f2" stroke-width=".7"/>
<polygon points="22.0 100.3 26.4 100.6 26.4 107.0 22.0 106.7" fill="#e0241c"/>
<polygon points="27.5 97.4 32.1 97.6 32.1 107.3 27.6 107.0" fill="#f6e21a"/>
<polygon points="33.2 94.4 37.8 94.6 37.8 107.6 33.2 107.3" fill="#fbfbfb"/>
<polygon points="38.9 89.9 43.4 90.0 43.5 107.9 39.0 107.7" fill="#2b241c"/>
<polygon points="44.8 85.1 48.7 85.2 48.8 108.2 44.8 108.0" fill="#eac84a"/>
<polygon points="111.1 111.7 136.1 113.1 136.2 121.0 111.2 119.4" fill="#2f6f5a"/>
<ellipse cx="116.2" cy="104.4" rx="11.0" ry="9.3" fill="#e9c41e"/>
<ellipse cx="116.2" cy="104.4" rx="8.3" ry="7.0" fill="#3a3216"/>
<text x="116.2" y="109.0" font-size="13" font-weight="bold" fill="#f8e45a" text-anchor="middle">$</text>
<ellipse cx="95.5" cy="99.2" rx="3.7" ry="3.3" fill="#3a3216"/>
<ellipse cx="95.5" cy="99.2" rx="2.2" ry="1.9" fill="#e9c41e"/>
<ellipse cx="93.4" cy="113.1" rx="2.6" ry="2.3" fill="#9a8a3a"/>
<polygon points="37.5 125.4 68.6 117.9 102.1 121.8 102.4 146.7 37.6 151.6" fill="#e6de22"/>
<polygon points="48.2 102.7 84.5 102.4 93.4 110.7 93.7 136.9 49.3 136.5" fill="#ee5058"/>
<polygon points="84.5 102.4 93.4 110.7 85.0 110.3" fill="#f6f6f6"/>
<ellipse cx="62.6" cy="113.9" rx="10.9" ry="8.4" fill="#fafafa"/>
<path d="M63.1 105.5A10.9 8.4 0 0 1 73.4 114.4L62.6 113.9z" fill="#35b5c4"/>
<path d="M54.8 108.1A10.9 8.4 0 0 1 63.1 105.5L62.6 113.9z" fill="#2b2a52"/>
<ellipse cx="62.6" cy="113.9" rx="4.8" ry="3.6" fill="#ee5058"/>
<path d="M76.4 113.9L90.3 114.3" stroke="#fbd0d0" stroke-width=".9"/>
<path d="M76.5 116.6L90.4 117.1" stroke="#fbd0d0" stroke-width=".9"/>
<path d="M76.5 119.4L90.4 119.8" stroke="#fbd0d0" stroke-width=".9"/>
<path d="M76.5 122.1L90.4 122.6" stroke="#fbd0d0" stroke-width=".9"/>
<path d="M76.5 124.9L90.4 125.4" stroke="#fbd0d0" stroke-width=".9"/>
<polygon points="71.9 130.0 74.4 130.2 74.5 135.2 71.9 135.0" fill="#35b5c4"/>
<polygon points="75.7 128.5 78.3 128.7 78.3 135.6 75.8 135.3" fill="#2b2a52"/>
<polygon points="79.6 131.5 82.2 131.7 82.2 135.9 79.6 135.7" fill="#35b5c4"/>
<polygon points="37.5 125.4 68.8 138.4 102.1 121.8 102.4 146.7 37.6 151.6" fill="#f1eb30"/>
<path d="M37.6 151.6L65.6 135.8M71.9 136.4L102.4 146.7" stroke="#d2ca1c" stroke-width=".9" fill="none"/>
<path d="M37.5 125.4L68.8 138.4L102.1 121.8" stroke="#d8d020" stroke-width=".8" fill="none"/>
<polygon points="76.2 141.3 114.4 142.1 114.5 150.8 76.3 149.2" fill="#d81b84" stroke="#f6e0ee" stroke-width=".8"/>
<text x="79.71" y="147.97" font-size="5.74" textLength="31.90" lengthAdjust="spacingAndGlyphs" fill="#fff" font-weight="bold">SEND</text>
<polygon points="105.1 147.0 123.1 153.2 115.9 154.4 122.2 161.4 118.4 162.9 112.7 156.4 108.1 159.3" fill="#f4f6f8" stroke="#9fb0bc" stroke-width=".5"/>
<ellipse cx="14.1" cy="137.9" rx="6.9" ry="6.4" fill="#e3b81c"/>
<ellipse cx="14.1" cy="137.9" rx="3.9" ry="3.5" fill="#f4de6a"/>
<ellipse cx="30.8" cy="137.8" rx="2.6" ry="2.4" fill="#e3b81c"/>
<polygon points="21.4 151.1 23.3 145.3 29.9 143.4 37.2 145.9 37.6 151.6 29.9 152.9" fill="#f2f6f8"/>
<ellipse cx="25.2" cy="148.7" rx="0.9" ry="0.9" fill="#e0241c"/>
<ellipse cx="28.9" cy="147.6" rx="0.9" ry="1.0" fill="#e9a81c"/>
<ellipse cx="32.7" cy="148.9" rx="0.9" ry="1.0" fill="#3b8a4a"/>
<ellipse cx="30.8" cy="150.9" rx="0.9" ry="1.0" fill="#2c6fd0"/>
<ellipse cx="35.2" cy="148.8" rx="0.9" ry="1.0" fill="#e0241c"/>
<g fill="#fff" font-weight="bold" stroke="#3587a6" stroke-width=".45" style="paint-order:stroke">
<text x="41.37" y="8.88" font-size="5.53" textLength="62.58" lengthAdjust="spacingAndGlyphs" stroke-width=".15">For Advanced Buyers</text>
<text x="37.86" y="22.03" font-size="13.79" textLength="70.65" lengthAdjust="spacingAndGlyphs">PLR Rights</text>
<text transform="translate(8.66 40.56) scale(0.640 1)" font-size="18.30" textLength="192.00" lengthAdjust="spacing">REPURPOSING</text>
<text x="42.38" y="62.57" font-size="27.16" textLength="57.21" lengthAdjust="spacingAndGlyphs">VIDEO</text>
<text transform="translate(2.70 83.63) scale(0.700 1)" font-size="25.16" textLength="192.23" lengthAdjust="spacing">PLR CONTENT</text>
</g>
<text x="29.86" y="167.39" font-size="6.84" textLength="81.18" lengthAdjust="spacingAndGlyphs" fill="#f2fafc" font-style="italic" font-weight="bold">Downloadable Content</text>
</svg>
<svg class="abs" style="left:0;top:0" width="846" height="497" viewBox="0 0 846 497">
<ellipse cx="179.9" cy="359" rx="18.2" ry="15.4" fill="#f2ee00" fill-opacity=".62"/>
<path d="M179.4 358.4l4.4 2.6l-2.2 .5l-1.2 2.2z" fill="#1c1c14"/>
<path d="M186.2 362.8v3.6M184.4 364.6h3.6" stroke="#2a2a1c" stroke-width=".9"/>
</svg>

  </div>
  <div id="bar" class="abs"></div>
  <div id="title" class="abs">2.2 Having Graphic Designs Created</div>
  <div id="pageno" class="abs">Page 24 of 49</div>
</div>
</body>
</html>
